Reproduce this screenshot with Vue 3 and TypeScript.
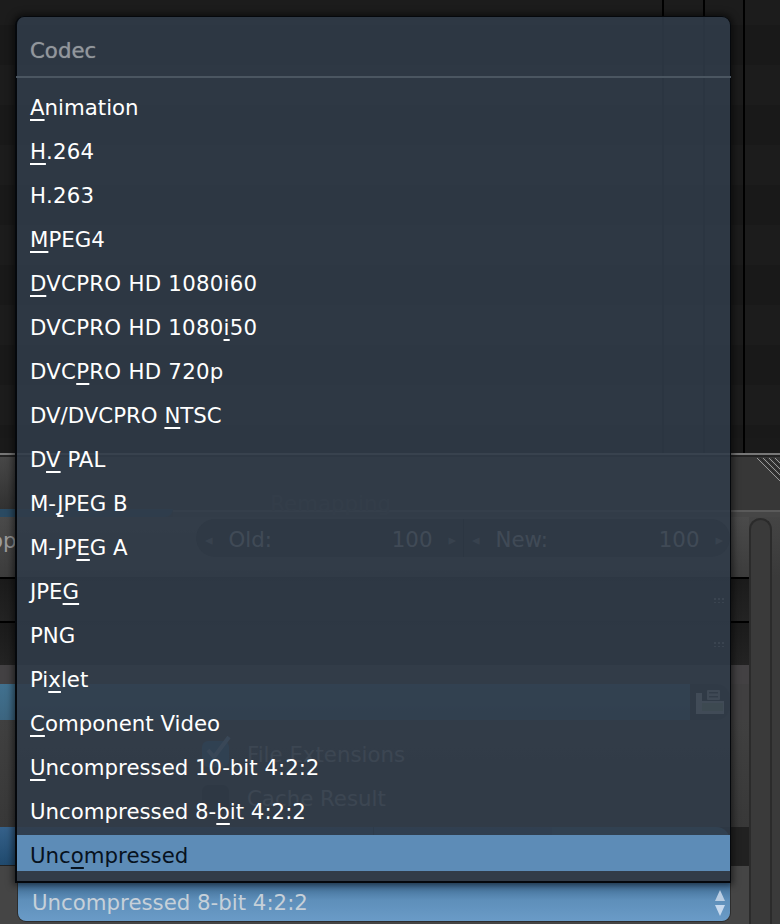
<script setup lang="ts">
interface Item { pre: string; key: string; post: string; active?: boolean; wide?: boolean }
const items: Item[] = [
  { pre: '', key: 'A', post: 'nimation' },
  { pre: '', key: 'H', post: '.264', wide: true },
  { pre: 'H.263', key: '', post: '', wide: true },
  { pre: '', key: 'M', post: 'PEG4' },
  { pre: '', key: 'D', post: 'VCPRO HD 1080i60', wide: true },
  { pre: 'DVCPRO HD 1080', key: 'i', post: '50', wide: true },
  { pre: 'DVC', key: 'P', post: 'RO HD 720p', wide: true },
  { pre: 'DV/DVCPRO ', key: 'N', post: 'TSC' },
  { pre: 'D', key: 'V', post: ' PAL' },
  { pre: 'M-', key: 'J', post: 'PEG B' },
  { pre: 'M-JP', key: 'E', post: 'G A' },
  { pre: 'JPE', key: 'G', post: '' },
  { pre: 'PNG', key: '', post: '' },
  { pre: 'Pi', key: 'x', post: 'let' },
  { pre: '', key: 'C', post: 'omponent Video' },
  { pre: '', key: 'U', post: 'ncompressed 10-bit 4:2:2' },
  { pre: 'Uncompressed 8-', key: 'b', post: 'it 4:2:2' },
  { pre: 'Unc', key: 'o', post: 'mpressed', active: true },
]
</script>

<template>
  <div class="app">
    <div class="timeline"></div>
    <div class="divider"></div>
    <div class="panel">
      <div class="header">
        <div class="header-left"><div class="header-button"></div></div>
        <div class="header-right">
          <span class="remap">Remapping</span>
          <svg class="hatch" width="23" height="24" viewBox="0 0 23 24">
            <path d="M0 0 L23 23 M6 0 L23 17 M12 0 L23 11 M18 0 L23 5" stroke="#9a9a9a" stroke-width="1" fill="none" />
            <path d="M3 0 L23 20 M9 0 L23 14 M15 0 L23 8" stroke="#222" stroke-width="1" fill="none" />
          </svg>
        </div>
      </div>
      <div class="body">
        <div class="main">
          <div class="row-remap">
            <span class="clip-label">op</span>
            <div class="number-pair">
              <div class="number">
                <span class="arrow">◂</span><span class="ghost">Old:</span><span class="ghost value">100</span><span class="arrow">▸</span>
              </div>
              <div class="number second">
                <span class="arrow">◂</span><span class="ghost">New:</span><span class="ghost value">100</span><span class="arrow">▸</span>
              </div>
            </div>
          </div>
          <div class="row-dark"><i class="grip"></i></div>
          <div class="row-dark"><i class="grip"></i></div>
          <div class="row-gap"></div>
          <div class="row-path">
            <div class="path-field"></div>
            <div class="path-icon">
              <svg width="30" height="26" viewBox="0 0 30 26">
                <rect x="12" y="1" width="13" height="10" rx="1" fill="#b8b8b8" />
                <rect x="14" y="3" width="9" height="1.5" fill="#444" />
                <rect x="14" y="7" width="9" height="1.5" fill="#444" />
                <path d="M1 4 H7 V12 H29 V25 H1 Z" fill="#c9c9c9" />
                <rect x="7" y="14" width="21" height="8" fill="#a5b48e" />
              </svg>
            </div>
          </div>
          <div class="row-options">
            <label class="option"><span class="check on"><svg width="30" height="28" viewBox="0 0 30 28"><path d="M6 15 L12 22 L27 2" stroke="#7fa4c4" stroke-width="4" fill="none" /></svg></span><span class="ghost dim">File Extensions</span></label>
            <label class="option"><span class="check"></span><span class="ghost dim">Cache Result</span></label>
          </div>
          <div class="row-format">
            <div class="seg first"></div><div class="seg second-seg"></div><div class="seg third"></div>
          </div>
          <div class="row-bottom">
            <div class="trigger">
              <span>Uncompressed 8-bit 4:2:2</span>
              <svg class="updown" width="10" height="26" viewBox="0 0 10 26">
                <path d="M5 0 L10 11 H0 Z" fill="#b9cde2" />
                <path d="M5 26 L10 15 H0 Z" fill="#c6d9ee" />
              </svg>
            </div>
          </div>
        </div>
        <div class="rail"><div class="track"></div></div>
      </div>
    </div>

    <div class="menu">
      <div class="title">Codec</div>
      <div class="separator"></div>
      <ul class="list">
        <li v-for="item in items" :key="item.pre + item.key + item.post" class="item" :class="{ active: item.active, wide: item.wide }">{{ item.pre }}<u v-if="item.key">{{ item.key }}</u>{{ item.post }}</li>
      </ul>
    </div>
  </div>
</template>

<style>
html, body { margin: 0; background: #1a1a1a; }
</style>

<style scoped>
.app {
  position: relative;
  width: 780px;
  height: 924px;
  overflow: hidden;
  display: flex;
  flex-direction: column;
  font-family: "DejaVu Sans", sans-serif;
  font-size: 21.3px;
  background: #1a1a1a;
}
.timeline {
  height: 453px;
  flex: none;
  background-color: #1a1a1a;
  background-image:
    linear-gradient(#000, #000),
    linear-gradient(#000, #000),
    linear-gradient(#000, #000),
    repeating-linear-gradient(#1c1c1c 0 40px, #191919 40px 80px);
  background-size: 2px 100%, 2px 100%, 2px 100%, 100% 100%;
  background-position: 743px 0, 662px 0, 703px 0, 0 -15px;
  background-repeat: no-repeat;
}
.divider {
  height: 4px;
  flex: none;
  background: linear-gradient(#777 0 2px, #222 2px 4px);
}
.panel {
  flex: 1;
  display: flex;
  flex-direction: column;
  min-height: 0;
}
.header {
  height: 60px;
  flex: none;
  display: flex;
}
.header-left {
  width: 173px;
  display: flex;
  flex-direction: column;
  justify-content: flex-end;
  background:
    linear-gradient(#474747, #2e2e2e) 0 0 / 17px 100% no-repeat,
    #373737;
}
.header-button {
  height: 8px;
  background: #2a4a62;
  border-radius: 0 0 10px 0;
}
.header-right {
  flex: 1;
  display: flex;
  justify-content: flex-end;
  align-items: flex-start;
  background: linear-gradient(#373737 0 53px, #5a5a5a 53px 55px, #464646 55px);
}
.remap {
  margin: 37px 366px 0 0;
  line-height: 20px;
  white-space: nowrap;
  color: #4c4c4c;
}
.hatch {
  flex: none;
  margin-top: 1px;
}
.ghost { color: #c0c0c0; }
.ghost.dim { color: #9c9c9c; }
.body {
  flex: 1;
  display: flex;
  min-height: 0;
}
.main {
  width: 749px;
  flex: none;
  display: flex;
  flex-direction: column;
}
.rail {
  flex: 1;
  background: linear-gradient(#444, #3a3a3a 60px);
  padding-right: 8px;
}
.track {
  height: 420px;
  margin-top: 1px;
  background: #3a3a3a;
  border: 2px solid #2b2b2b;
  border-bottom: 0;
  border-radius: 13px 13px 0 0;
}
.row-remap {
  height: 60px;
  flex: none;
  display: flex;
  align-items: flex-start;
  background: linear-gradient(#4a4a4a, #3c3c3c);
}
.clip-label {
  width: 206px;
  margin-left: -10px;
  flex: none;
  color: #9c9c9c;
  line-height: 48px;
}
.number-pair {
  margin-top: 2px;
  width: 534px;
  height: 38px;
  display: flex;
  border-radius: 19px;
  background: #242424;
}
.number {
  flex: 1;
  display: flex;
  align-items: center;
  gap: 16px;
  padding: 3px 7px 0 9px;
}
.number.second { border-left: 1px solid #111; padding-left: 8px; }
.value { margin-left: auto; }
.arrow { color: #777; font-size: 15px; }
.row-dark {
  height: 44px;
  flex: none;
  box-sizing: border-box;
  padding-top: 2px;
  background:
    linear-gradient(#000, #000) 0 0 / 17px 2px no-repeat,
    linear-gradient(#000, #000) 100% 0 / 19px 2px no-repeat,
    linear-gradient(#1a1a1a, #232323);
  display: flex;
  justify-content: flex-end;
  align-items: center;
  padding-right: 24px;
}
.grip {
  width: 12px;
  height: 6px;
  background-image: radial-gradient(#8a8a8a 1px, transparent 1px);
  background-size: 4px 4px;
}
.row-gap {
  height: 19px;
  flex: none;
  background: #434143;
}
.row-path {
  height: 36px;
  flex: none;
  display: flex;
  background: #403f40;
}
.path-field {
  width: 690px;
  flex: none;
  background: linear-gradient(#41718f, #3c6580);
}
.path-icon {
  width: 40px;
  flex: none;
  display: flex;
  align-items: center;
  justify-content: center;
  background: #333;
  border-radius: 0 14px 14px 0;
}
.row-options {
  height: 107px;
  flex: none;
  box-sizing: border-box;
  padding: 12px 0 0 202px;
  display: flex;
  flex-direction: column;
  background: linear-gradient(#404040, #383838);
}
.option {
  height: 44px;
  display: flex;
  align-items: center;
  gap: 18px;
}
.check {
  width: 27px;
  height: 26px;
  border-radius: 6px;
  background: #1f1f1f;
  position: relative;
}
.check.on { background: #2f6a9c; }
.check svg { position: absolute; left: 0; top: -6px; }
.row-format {
  height: 39px;
  flex: none;
  display: flex;
  background: #212121;
  border-bottom: 1px solid #222;
  box-sizing: border-box;
}
.seg { height: 100%; box-sizing: border-box; background: linear-gradient(#35618a, #204a6e); }
.first { width: 373px; }
.second-seg { width: 179px; border-left: 1px solid #1d3d58; }
.third { width: 178px; border-radius: 0 14px 14px 0; background: #3a6c96; }
.row-bottom {
  flex: 1;
  background: #454545;
  padding: 17px 18px 0 17px;
  min-height: 0;
}
.trigger {
  height: 39px;
  box-sizing: border-box;
  display: flex;
  align-items: center;
  justify-content: space-between;
  padding: 1px 5px 0 14px;
  border-radius: 0 0 9px 9px;
  border: 1px solid #2d2d2d;
  border-top: 0;
  color: #c6d0d9;
  background: linear-gradient(#3e6a92, #5e8fba 45%, #6a9bc7);
}
.menu {
  position: absolute;
  left: 15px;
  top: 16px;
  width: 713px;
  height: 864px;
  box-sizing: content-box;
  border: 1px solid #05080c;
  border-left-width: 2px;
  border-bottom-width: 2px;
  border-radius: 9px 9px 0 0;
  background: rgba(48, 60, 73, 0.89);
  box-shadow: 0 0 7px 2px rgba(0, 0, 0, 0.55);
  display: flex;
  flex-direction: column;
}
.title {
  height: 59px;
  flex: none;
  box-sizing: border-box;
  padding: 19px 0 0 13px;
  line-height: 30px;
  color: #92979c;
  text-shadow: 0 0 1px #7d8388;
}
.separator {
  height: 2px;
  flex: none;
  margin: 0 -1px;
  background: #4b5661;
}
.list {
  list-style: none;
  margin: 9px 0 0;
  padding: 0;
  display: flex;
  flex-direction: column;
  gap: 8px;
}
.item {
  height: 36px;
  box-sizing: border-box;
  padding: 6px 0 0 13px;
  line-height: 30px;
  color: #fff;
  white-space: pre;
}
.item.wide { letter-spacing: 0.25px; }
.item u {
  text-decoration-thickness: 1.5px;
  text-underline-offset: 3.5px;
  text-decoration-skip-ink: none;
}
.item.active {
  background: #5d8cb7;
  color: #07121e;
}
</style>
